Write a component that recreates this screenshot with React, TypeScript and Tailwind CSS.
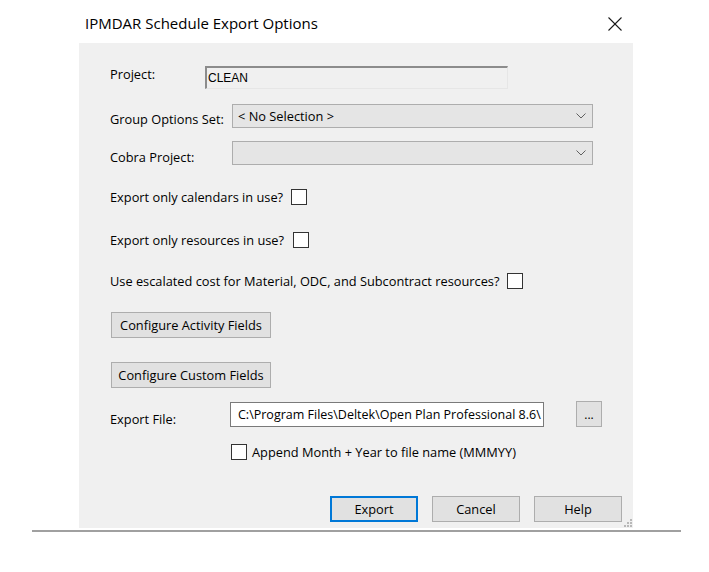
import React from 'react';

// --- ikon kecil ---
function Chevron() {
  return (
    <svg width="10" height="6" viewBox="0 0 10 6" className="block">
      <polyline points="0.5,0.5 5,5 9.5,0.5" fill="none" stroke="#606060" strokeWidth="1" />
    </svg>
  );
}

function CloseIcon() {
  return (
    <svg width="14" height="14" viewBox="0 0 14 14" className="block">
      <line x1="0.5" y1="0.5" x2="13.5" y2="13.5" stroke="#1a1a1a" strokeWidth="1.1" />
      <line x1="13.5" y1="0.5" x2="0.5" y2="13.5" stroke="#1a1a1a" strokeWidth="1.1" />
    </svg>
  );
}

function Box() {
  return <div className="w-[16px] h-[16px] bg-white border border-[#333333] shrink-0" />;
}

function Select({ value }: { value?: string }) {
  return (
    <div className="w-[361px] h-[24px] bg-[#e5e5e5] border border-[#adadad] flex items-center justify-between pl-[5px] pr-[6px]">
      <span className="text-[12.8px] text-black leading-none">{value}</span>
      <Chevron />
    </div>
  );
}

function WinButton({ label, w, focused }: { label: string; w: string; focused?: boolean }) {
  return (
    <div
      className={
        'h-[26px] bg-[#e1e1e1] flex items-center justify-center text-[12.8px] text-black ' +
        w +
        (focused ? ' border-2 border-[#0078d7]' : ' border border-[#adadad]')
      }
    >
      {label}
    </div>
  );
}

export default function App() {
  return (
    <div className="w-[709px] h-[572px] bg-white overflow-hidden" style={{ fontFamily: '"Open Sans", "Noto Sans", sans-serif' }}>
      {/* title bar */}
      <div className="ml-[79px] w-[554px] h-[43px] flex items-center justify-between pl-[6px] pr-[11px] pt-[4px]">
        <span className="text-[15px] text-black">IPMDAR Schedule Export Options</span>
        <CloseIcon />
      </div>

      {/* body */}
      <div className="relative ml-[79px] w-[554px] h-[485px] bg-[#f0f0f0] pl-[31px] pt-[23px] text-[12.8px] leading-[17px] text-black">
        {/* Project */}
        <div className="flex items-start h-[23px]">
          <span className="w-[95px]">Project:</span>
          <div className="w-[303px] h-[23px] border-t-2 border-l-2 border-t-[#8c8c8c] border-l-[#8c8c8c] border-b border-r border-b-[#e6e6e6] border-r-[#e6e6e6] flex items-center pl-[1px]">
            <span className="text-[12px] leading-none" style={{ fontFamily: '"Liberation Sans", Arial, sans-serif' }}>CLEAN</span>
          </div>
        </div>

        {/* Group Options Set */}
        <div className="flex items-start h-[24px] mt-[15px]">
          <span className="w-[122px] mt-[7px]">Group Options Set:</span>
          <Select value="< No Selection >" />
        </div>

        {/* Cobra Project */}
        <div className="flex items-start h-[24px] mt-[13px]">
          <span className="w-[122px] mt-[8px]">Cobra Project:</span>
          <Select />
        </div>

        <div className="flex items-center gap-[8px] mt-[24px] h-[16px]">
          <span>Export only calendars in use?</span>
          <Box />
        </div>

        <div className="flex items-center gap-[9px] mt-[27px] h-[16px]">
          <span>Export only resources in use?</span>
          <Box />
        </div>

        <div className="flex items-center gap-[8px] mt-[25px] h-[16px]">
          <span>Use escalated cost for Material, ODC, and Subcontract resources?</span>
          <Box />
        </div>

        <div className="mt-[23px] ml-[1px]">
          <WinButton label="Configure Activity Fields" w="w-[160px]" />
        </div>

        <div className="mt-[24px] ml-[1px]">
          <WinButton label="Configure Custom Fields" w="w-[160px]" />
        </div>

        {/* Export File */}
        <div className="flex items-center h-[26px] mt-[13px]">
          <span className="w-[120px] mt-[10px]">Export File:</span>
          <div className="w-[314px] h-[25px] bg-white border border-[#7a7a7a] flex items-center pl-[7px] overflow-hidden whitespace-nowrap">
            <span className="text-[12.5px]">C:\Program Files\Deltek\Open Plan Professional 8.6\</span>
          </div>
          <div className="ml-[32px] w-[26px] h-[26px] bg-[#e1e1e1] border border-[#adadad] flex items-center justify-center text-[12px]">
            ...
          </div>
        </div>

        {/* Append */}
        <div className="flex items-center gap-[5px] mt-[17px] ml-[121px] h-[16px]">
          <Box />
          <span className="text-[12.8px]">Append Month + Year to file name (MMMYY)</span>
        </div>

        {/* bottom buttons */}
        <div className="flex justify-end gap-[14px] pr-[11px] mt-[36px]">
          <WinButton label="Export" w="w-[88px]" focused />
          <WinButton label="Cancel" w="w-[88px]" />
          <WinButton label="Help" w="w-[88px]" />
        </div>

        {/* resize grip */}
        <div className="absolute right-[1px] bottom-[1px] grid grid-cols-3 gap-[1px]">
          <span className="w-[2px] h-[2px]" />
          <span className="w-[2px] h-[2px]" />
          <span className="w-[2px] h-[2px] bg-[#b8b8b8]" />
          <span className="w-[2px] h-[2px]" />
          <span className="w-[2px] h-[2px] bg-[#b8b8b8]" />
          <span className="w-[2px] h-[2px] bg-[#b8b8b8]" />
          <span className="w-[2px] h-[2px] bg-[#b8b8b8]" />
          <span className="w-[2px] h-[2px] bg-[#b8b8b8]" />
          <span className="w-[2px] h-[2px] bg-[#b8b8b8]" />
        </div>
      </div>

      {/* garis bawah */}
      <div className="mt-[2px] ml-[32px] w-[649px] h-[2px] bg-[#a0a0a0]" />
    </div>
  );
}
